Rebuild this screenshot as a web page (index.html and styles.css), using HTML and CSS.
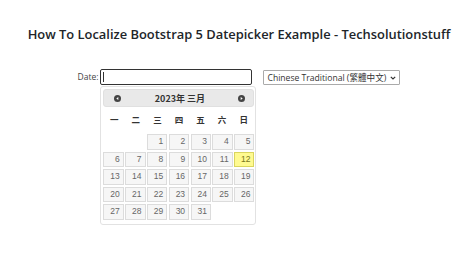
FILE: index.html
```html
<!DOCTYPE html>
<html lang="zh-TW">

<head>
    <meta charset="UTF-8">
    <meta name="viewport" content="width=device-width, initial-scale=1.0">
    <title>How To Localize Bootstrap 5 Datepicker Example - Techsolutionstuff</title>
    <link rel="stylesheet" href="styles.css">
</head>

<body>
    <div class="container">
        <h3 class="title">How To Localize Bootstrap 5 Datepicker Example - Techsolutionstuff</h3>

        <div class="form-row">
            <label class="label" for="datepicker">Date:</label>
            <div class="picker-col">
                <div class="date-input"><span class="caret"></span></div>
                <div class="calendar">
                    <div class="dp-header">
                        <span class="dp-nav"><svg width="7" height="7" viewBox="0 0 7 7"><circle cx="3.5" cy="3.5" r="3.5" fill="#444"/><path d="M4.3 1.9 L2.3 3.5 L4.3 5.1 Z" fill="#fff"/></svg></span>
                        <span class="dp-title">2023年 三月</span>
                        <span class="dp-nav"><svg width="7" height="7" viewBox="0 0 7 7"><circle cx="3.5" cy="3.5" r="3.5" fill="#444"/><path d="M2.7 1.9 L4.7 3.5 L2.7 5.1 Z" fill="#fff"/></svg></span>
                    </div>
                    <div class="dp-weekdays">
                        <span>一</span><span>二</span><span>三</span><span>四</span><span>五</span><span>六</span><span>日</span>
                    </div>
                    <div class="dp-days">
                        <span></span><span></span>
                        <a class="day">1</a><a class="day">2</a><a class="day">3</a><a class="day">4</a><a class="day">5</a>
                        <a class="day">6</a><a class="day">7</a><a class="day">8</a><a class="day">9</a><a class="day">10</a><a class="day">11</a><a class="day today">12</a>
                        <a class="day">13</a><a class="day">14</a><a class="day">15</a><a class="day">16</a><a class="day">17</a><a class="day">18</a><a class="day">19</a>
                        <a class="day">20</a><a class="day">21</a><a class="day">22</a><a class="day">23</a><a class="day">24</a><a class="day">25</a><a class="day">26</a>
                        <a class="day">27</a><a class="day">28</a><a class="day">29</a><a class="day">30</a><a class="day">31</a>
                    </div>
                </div>
            </div>

            <div class="lang-select">
                <span>Chinese Traditional (繁體中文)</span>
                <svg width="6" height="4" viewBox="0 0 6 4"><path d="M0.8 0.8 L3 3 L5.2 0.8" fill="none" stroke="#333" stroke-width="1.2"/></svg>
            </div>
        </div>
    </div>
</body>

</html>
```

FILE: styles.css
```css
body {
    margin: 0;
    background-color: #fff;
    font-family: "Open Sans", "Noto Sans", sans-serif;
    color: #212529;
}

.container {
    padding-top: 24px;
}

.title {
    margin: 0;
    padding-left: 4px;
    text-align: center;
    font-size: 12.9px;
    font-weight: 600;
    line-height: 20px;
}

.form-row {
    display: flex;
    justify-content: center;
    align-items: flex-start;
    margin-top: 25px;
    padding-left: 4px;
}

.label {
    margin-top: 2px;
    margin-right: 2px;
    font-size: 8.5px;
    line-height: 12px;
    color: #444;
}

.picker-col {
    display: flex;
    flex-direction: column;
    width: 156px;
}

.date-input {
    box-sizing: border-box;
    width: 152px;
    height: 16px;
    padding: 2px 0 0 2px;
    border: 1.5px solid #333;
    border-radius: 2px;
    background-color: #fff;
}

.caret {
    display: block;
    width: 1px;
    height: 10px;
    background-color: #333;
}

.lang-select {
    display: flex;
    align-items: center;
    justify-content: space-between;
    box-sizing: border-box;
    margin-left: 7px;
    margin-top: 1px;
    width: 137px;
    height: 15px;
    padding: 0 3px 0 3px;
    font-family: "Open Sans", "Noto Sans CJK TC", sans-serif;
    font-size: 8.6px;
    color: #333;
    border: 1px solid #aaa;
    border-radius: 1px;
    background-color: #fff;
}

.calendar {
    margin-top: 1px;
    box-sizing: border-box;
    padding: 2px 1px 4px 2px;
    border: 1px solid #e2e2e2;
    border-radius: 3px;
    background-color: #fff;
    font-family: "Liberation Sans", "Noto Sans CJK TC", sans-serif;
}

.dp-header {
    display: flex;
    justify-content: space-between;
    align-items: center;
    height: 18px;
    box-sizing: border-box;
    padding: 0 8px 0 10px;
    background-color: #e9e9e9;
    border: 1px solid #e0e0e0;
    border-radius: 3px;
}

.dp-nav {
    display: flex;
}

.dp-title {
    font-family: "Noto Sans CJK TC", sans-serif;
    font-size: 9px;
    font-weight: 700;
    color: #333;
}

.dp-weekdays {
    display: grid;
    grid-template-columns: repeat(7, 1fr);
    height: 27px;
    padding-bottom: 3px;
    box-sizing: border-box;
    align-items: center;
    text-align: center;
    font-family: "Noto Sans CJK TC", sans-serif;
    font-size: 8.5px;
    font-weight: 700;
    color: #333;
}

.dp-days {
    display: grid;
    grid-template-columns: repeat(7, 1fr);
    grid-auto-rows: 15.5px;
    gap: 2px 1.5px;
}

.day {
    box-sizing: border-box;
    padding-right: 3px;
    text-align: right;
    line-height: 13.5px;
    font-size: 8.5px;
    color: #666;
    background-color: #f6f6f6;
    border: 1px solid #dcdcdc;
}

.today {
    background-color: #fffa90;
    border-color: #dad55e;
    color: #777620;
}
```
